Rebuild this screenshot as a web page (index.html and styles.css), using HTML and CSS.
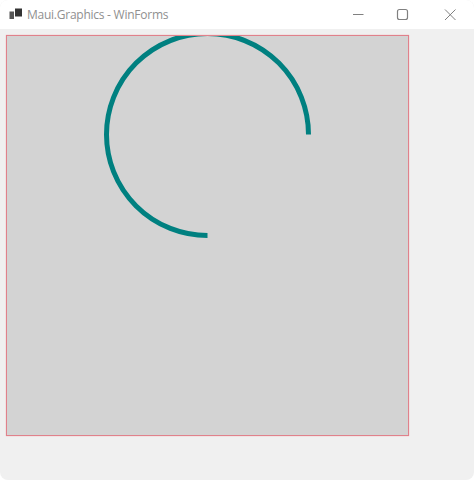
FILE: index.html
```html
<!DOCTYPE html>
<html lang="en">
<head>
<meta charset="utf-8">
<title>Maui.Graphics - WinForms</title>
<link rel="stylesheet" href="styles.css">
</head>
<body>
<div class="window">
  <header class="titlebar">
    <svg class="app-icon" width="14" height="12" viewBox="0 0 14 12">
      <path d="M0.500 3.500h4.500v7.500H0.500z" fill="#555"/>
      <path d="M6 0.500h7v8H6z" fill="#333"/>
    </svg>
    <span class="title">Maui.Graphics - WinForms</span>
    <div class="controls">
      <svg class="ctl" width="46" height="29" viewBox="0 0 46 29"><path d="M18 14.500h10.500" stroke="#808080" fill="none"/></svg>
      <svg class="ctl ctl-max" width="46" height="29" viewBox="0 0 46 29"><rect x="18.500" y="9.500" width="10" height="10" rx="2" stroke="#808080" stroke-width="1.200" fill="none"/></svg>
      <svg class="ctl" width="46" height="29" viewBox="0 0 46 29"><path d="M18 9.500l10.500 10.500M28.500 9.500L18 20" stroke="#808080" fill="none"/></svg>
    </div>
  </header>
  <main class="client">
    <div class="canvas">
      <svg class="drawing" width="401" height="399" viewBox="0 0 401 399">
        <path d="M301.500 98.500A101 101 0 1 0 200.500 199.500" fill="none" stroke="#008080" stroke-width="5"/>
      </svg>
    </div>
  </main>
</div>
</body>
</html>
```
FILE: styles.css
```css
* { box-sizing: border-box; }
html, body { margin: 0; height: 100%; background: #fff; }
body { width: 474px; height: 480px; overflow: hidden; }
.window {
  width: 474px;
  height: 480px;
  display: flex;
  flex-direction: column;
  background: #f0f0f0;
  border-radius: 8px;
  overflow: hidden;
}
.titlebar {
  height: 29px;
  flex: none;
  display: flex;
  align-items: center;
  background: #fff;
  padding-left: 9px;
}
.app-icon { flex: none; margin-top: -2px; }
.title {
  margin-left: 4px;
  font: 12px "Open Sans", "Noto Sans", sans-serif;
  letter-spacing: -0.25px;
  color: #909090;
  white-space: nowrap;
}
.controls { margin-left: auto; display: flex; margin-right: 1px; }
.ctl { display: block; }
.ctl-max { margin-left: -2px; margin-right: 2px; }
.client { flex: 1; padding: 6px 0 0 6px; }
.canvas {
  width: 403px;
  height: 401px;
  border: 1px solid #e0818b;
  box-shadow: 0 0 1px #f0a0a8;
  background: #d3d3d3;
  overflow: hidden;
}
.drawing { display: block; }
```
